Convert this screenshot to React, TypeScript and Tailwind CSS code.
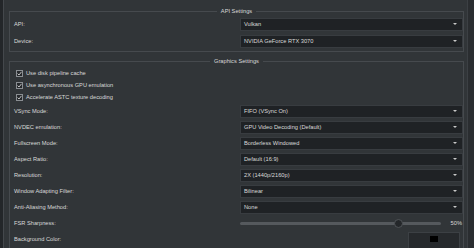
import React from 'react';

const Combo = ({ value }: { value: string }) => (
  <div className="h-[13px] flex-1 flex items-center justify-between bg-[#1f2225] border border-[#383c40] pl-[3px] pr-[5px]">
    <span>{value}</span>
    <span className="w-0 h-0 border-x-[2px] border-x-transparent border-t-[2px] border-t-[#c8c8c8]" />
  </div>
);

const Row = ({ label, value, h = 'h-[16px]' }: { label: string; value: string; h?: string }) => (
  <div className={`flex items-center ${h}`}>
    <span className="w-[230px] pl-[4px]">{label}</span>
    <Combo value={value} />
  </div>
);

const Check = ({ label }: { label: string }) => (
  <div className="flex items-center h-[12px] pl-[6px] gap-[3px]">
    <span className="w-[7px] h-[7px] border border-[#8a8e92] bg-[#26292c] flex items-center justify-center">
      <svg width="5" height="5" viewBox="0 0 5 5" fill="none">
        <path d="M0.6 2.6 L2 4 L4.5 0.8" stroke="#d6d6d6" strokeWidth="0.9" />
      </svg>
    </span>
    <span>{label}</span>
  </div>
);

const Group = ({ title, children, className = '' }: { title: string; children: React.ReactNode; className?: string }) => (
  <fieldset className={`border border-[#464a4e] ${className}`}>
    <legend className="mx-auto px-[4px] leading-[7px]">{title}</legend>
    {children}
  </fieldset>
);

export default function App() {
  return (
    <div className="w-[474px] h-[248px] overflow-hidden flex bg-[#313538] text-[#d9d9d9] text-[5.7px] font-['Liberation_Sans',sans-serif]">
      <div className="w-[3px] bg-[#232629]" />
      <div className="w-px bg-[#44484c]" />
      <div className="flex-1 flex flex-col pt-[7.5px] pl-[5px] pr-[3px] gap-[5.5px]">
        <Group title="API Settings" className="pt-[1px] pb-[1.5px]">
          <Row label="API:" value="Vulkan" h="h-[17px]" />
          <Row label="Device:" value="NVIDIA GeForce RTX 3070" h="h-[17px]" />
        </Group>
        <Group title="Graphics Settings" className="pt-[2.5px]">
          <Check label="Use disk pipeline cache" />
          <Check label="Use asynchronous GPU emulation" />
          <Check label="Accelerate ASTC texture decoding" />
          <Row label="VSync Mode:" value="FIFO (VSync On)" />
          <Row label="NVDEC emulation:" value="GPU Video Decoding (Default)" />
          <Row label="Fullscreen Mode:" value="Borderless Windowed" />
          <Row label="Aspect Ratio:" value="Default (16:9)" />
          <Row label="Resolution:" value="2X (1440p/2160p)" />
          <Row label="Window Adapting Filter:" value="Bilinear" />
          <Row label="Anti-Aliasing Method:" value="None" />
          <div className="flex items-center h-[16px]">
            <span className="w-[230px] pl-[4px]">FSR Sharpness:</span>
            <div className="w-[201px] h-[3px] rounded-full bg-[#55595d] relative">
              <span className="absolute left-[154px] top-[-3px] w-[9px] h-[9px] rounded-full bg-[#24272a] border border-[#4f5357]" />
            </div>
            <span className="flex-1 text-right pr-[1px]">50%</span>
          </div>
          <div className="flex items-start h-[30px]">
            <span className="w-[230px] pl-[4px] h-[16px] flex items-center">Background Color:</span>
            <div className="ml-[168px] mt-[1px] w-[52px] h-[24px] bg-[#26292c] border border-[#3c4044] flex justify-center pt-[3px]">
              <span className="w-[8px] h-[6px] bg-black" />
            </div>
          </div>
        </Group>
      </div>
      <div className="w-[7px] bg-[#2a2d30] border-l border-[#3c4044]" />
    </div>
  );
}
